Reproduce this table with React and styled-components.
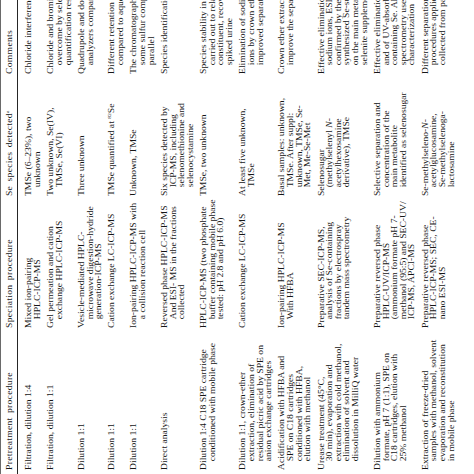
import React from "react";
import styled, { createGlobalStyle } from "styled-components";

const GlobalStyle = createGlobalStyle`
  html, body {
    margin: 0;
    padding: 0;
    background: #ffffff;
  }
`;

const Page = styled.div`
  width: 474px;
  height: 474px;
  overflow: hidden;
  background: #ffffff;
`;

// the printed table is turned a quarter turn, read from bottom to top
const TurnedTable = styled.div`
  width: 430px;
  transform-origin: 0 0;
  transform: translateY(474px) rotate(-90deg) scaleX(1.12);
  font-family: "Liberation Serif", "Times New Roman", serif;
  font-size: 8.6px;
  line-height: 8.6px;
  color: #161616;
  border-top: 1px solid #6a6a6a;
`;

const columns = "126.8px 117.8px 109px 1fr";

const HeadRow = styled.div`
  display: grid;
  grid-template-columns: ${columns};
  align-items: center;
  height: 16px;
  letter-spacing: 0.25px;
  word-spacing: 1.5px;
  border-bottom: 1.5px solid #262626;
`;

const Body = styled.div`
  padding-top: 4px;
`;

const Row = styled.div`
  display: grid;
  grid-template-columns: ${columns};
  padding: 2.4px 0;
`;

const Cell = styled.div`
  padding-left: 3.6px;
  white-space: nowrap;
`;

const Line = styled.div`
  padding-left: ${(p) => (p.$indent ? "0.9em" : "0")};
`;

const Sup = styled.sup`
  font-size: 5px;
  line-height: 0;
  vertical-align: 3px;
`;

const rows = [
  {
    pre: ["Filtration, dilution 1:4"],
    spec: ["Mixed ion-pairing", "HPLC-ICP-MS"],
    se: ["TMSe (6–23%), two", "unknown"],
    com: ["Chloride interferences on Se"],
  },
  {
    pre: ["Filtration, dilution 1:1"],
    spec: ["Gel permeation and cation", "exchange HPLC-ICP-MS"],
    se: ["Two unknown, Se(IV),", "TMSe, Se(VI)"],
    com: [
      "Chloride and bromide interferences",
      "overcome by selecting isotopes for",
      "quantification results",
    ],
  },
  {
    pre: ["Dilution 1:1"],
    spec: [
      "Vesicle-mediated HPLC-",
      "microwave digestion-hydride",
      "generation-ICP-MS",
    ],
    se: ["Three unknown"],
    com: ["Quadrupole and double-focusing", "analyzers compared"],
  },
  {
    pre: ["Dilution 1:1"],
    spec: ["Cation exchange LC-ICP-MS"],
    se: [
      <>
        TMSe quantified at <Sup>82</Sup>Se
      </>,
    ],
    com: ["Different retention times", "compared to aqueous standards"],
  },
  {
    pre: ["Dilution 1:1"],
    spec: ["Ion-pairing HPLC-ICP-MS with", "a collision reaction cell"],
    se: ["Unknown, TMSe"],
    com: [
      "The chromatographic behaviour of",
      "some sulfur compounds studied in",
      "parallel",
    ],
  },
  {
    pre: ["Direct analysis"],
    spec: [
      "Reversed phase HPLC-ICP-MS",
      "And ESI- MS in the fractions",
      "collected",
    ],
    se: [
      "Six species detected by",
      "ICP-MS, including",
      "selenomethionine and",
      "selenocystamine",
    ],
    com: ["Species identification by ESI-MS"],
  },
  {
    pre: ["Dilution 1:4 C18 SPE cartridge", "conditioned with mobile phase"],
    spec: [
      "HPLC-ICP-MS (two phosphate",
      "buffer containing mobile phase",
      "tested: pH 2.8 and pH 6.0)",
    ],
    se: ["TMSe, two unknown"],
    com: [
      "Species stability in urine was",
      "carried out to relate the main",
      "constituent, recovery tested in",
      "spiked urine",
    ],
  },
  {
    pre: [
      "Dilution 1:1, crown-ether",
      "extraction, elimination of",
      "residual picric acid by SPE on",
      "anion exchange cartridges",
    ],
    spec: ["Cation exchange LC-ICP-MS"],
    se: ["At least five unknown,", "TMSe"],
    com: [
      "Elimination of sodium and potassium",
      "ions by crown ether extraction",
      "improved separation",
    ],
  },
  {
    pre: [
      "Acidification with HFBA and",
      "SPE on C18 cartridges",
      "conditioned with HFBA,",
      "elution with methanol",
    ],
    spec: ["Ion-pairing HPLC-ICP-MS", "With HFBA"],
    se: [
      "Basal samples: unknown,",
      "TMSe. After suppl:",
      "unknown, TMSe, Se-",
      "Met, Me-Se-Met",
    ],
    com: ["Crown ether extraction did not", "improve the separation"],
  },
  {
    pre: [
      "Urease treatment (45°C,",
      "30 min), evaporation and",
      "extraction with cold methanol,",
      "elimination of solvent and",
      "dissolution in MilliQ water",
    ],
    spec: [
      "Preparative SEC-ICP-MS,",
      "analysis of Se-containing",
      "fractions by electrospray",
      "tandem mass spectrometry",
    ],
    se: [
      "Selenosugar",
      <>
        (methylselenyl <i>N</i>-
      </>,
      "acetylhexosamine",
      "derivative), TMSe",
    ],
    com: [
      "Effective elimination of urea and",
      "sodium ions, ESI-MS structure",
      "confirmed by the chemically",
      "synthesized Se-sugar, studies",
      "on the main metabolite after",
      "selenite supplementation",
    ],
  },
  {
    pre: [
      "Dilution with ammonium",
      "formate, pH 7 (1:1), SPE on",
      "C18 cartridges, elution with",
      "25% methanol",
    ],
    spec: [
      "Preparative reversed phase",
      "HPLC-UV/ICP-MS",
      "(ammonium formate pH 7-",
      "methanol (95:5) and SEC-UV/",
      "ICP-MS, APCI-MS",
    ],
    se: [
      "Selective separation and",
      "concentration of the",
      "main metabolite",
      "identified as selenosugar",
    ],
    com: [
      "Effective elimination of salts",
      "and of UV-absorbing compounds",
      "containing Se. APCI mass",
      "spectrometry used for",
      "characterization",
    ],
  },
  {
    pre: [
      "Extraction of freeze-dried",
      "samples with methanol, solvent",
      "evaporation and reconstitution",
      "in mobile phase",
    ],
    spec: [
      "Preparative reversed phase",
      "HPLC-ICP-MS; SEC, CE-",
      "nano ESI-MS",
    ],
    se: [
      <>
        Se-methylseleno-<i>N</i>-
      </>,
      "acetylglucosamine,",
      "Se-methylselenoga-",
      "lactosamine",
    ],
    com: [
      "Different separation",
      "procedures applied to urine",
      "collected from patients",
    ],
  },
];

const TableCell = ({ lines }) => (
  <Cell>
    {lines.map((text, i) => (
      <Line key={i} $indent={i > 0}>
        {text}
      </Line>
    ))}
  </Cell>
);

export default function App() {
  return (
    <Page>
      <GlobalStyle />
      <TurnedTable>
        <HeadRow>
          <Cell>Pretreatment procedure</Cell>
          <Cell>Speciation procedure</Cell>
          <Cell>
            Se species detected<Sup>a</Sup>
          </Cell>
          <Cell>Comments</Cell>
        </HeadRow>
        <Body>
          {rows.map((r, i) => (
            <Row key={i}>
              <TableCell lines={r.pre} />
              <TableCell lines={r.spec} />
              <TableCell lines={r.se} />
              <TableCell lines={r.com} />
            </Row>
          ))}
        </Body>
      </TurnedTable>
    </Page>
  );
}
